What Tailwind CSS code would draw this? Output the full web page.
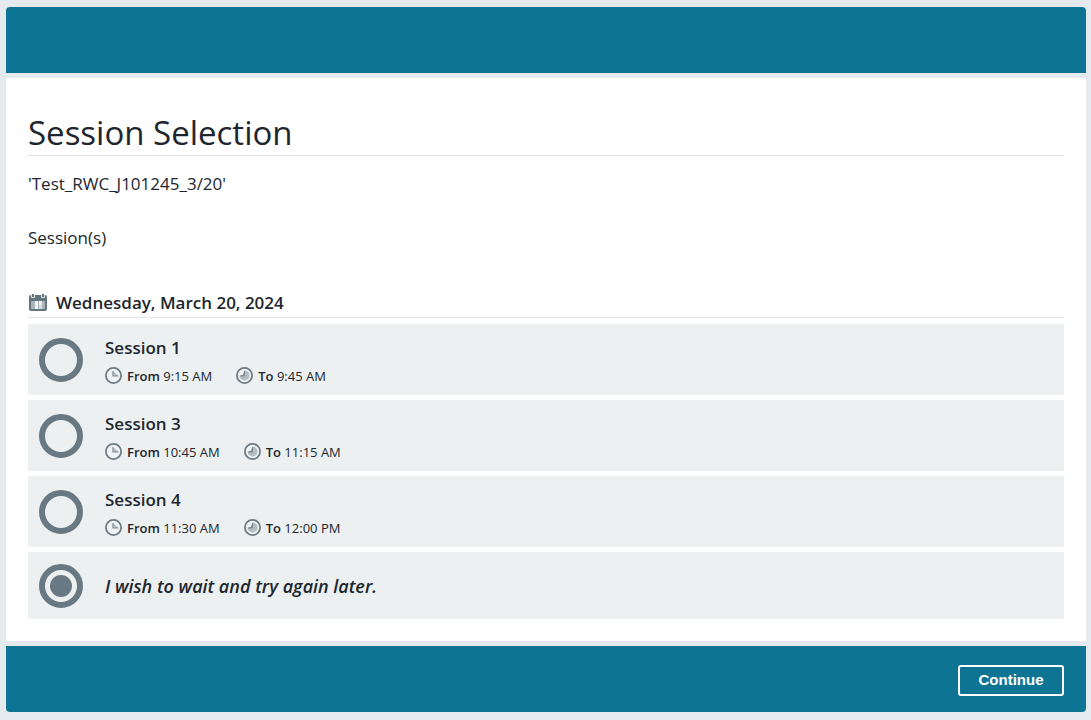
<!DOCTYPE html>
<html lang="en">

<head>
  <meta charset="UTF-8" />
  <meta name="viewport" content="width=device-width, initial-scale=1.0" />
  <title>Session Selection</title>
  <script src="https://cdn.jsdelivr.net/npm/@tailwindcss/browser@4"></script>
</head>

<body class="bg-[#e4eaed] text-[#20262e] font-['Segoe_UI','Open_Sans',sans-serif]">
  <!-- shared icons -->
  <svg class="hidden">
    <symbol id="clock-from" viewBox="0 0 18 18">
      <circle cx="8.5" cy="8.5" r="7.6" fill="#f1f4f4" stroke="#6d7c85" stroke-width="1.8" />
      <path d="M8 4l1 5h4.5" fill="#b3bdc2" />
      <path d="M8 4v5h5.5" fill="none" stroke="#7b8890" stroke-width="1.2" />
    </symbol>
    <symbol id="clock-to" viewBox="0 0 18 18">
      <circle cx="8.5" cy="8.5" r="7.6" fill="#f1f4f4" stroke="#6d7c85" stroke-width="1.8" />
      <path d="M8.5 3.5a5 5 0 1 1-5 5h5z" fill="#b3bdc2" />
      <path d="M8.5 4v5H4.5l3-1z" fill="#7b8890" stroke="#7b8890" stroke-width=".9" />
    </symbol>
  </svg>

  <div class="pt-[7px] pr-[5px] pb-2 pl-1.5 flex flex-col gap-[5px]">
    <header class="h-[66px] bg-[#0d7494] rounded-t"></header>

    <form id="sessions" class="bg-white px-[22px] pt-[33px] pb-[22px]">
      <h1 class="text-[33px] leading-[44px] border-b border-[#e2e5e7]">Session Selection</h1>
      <p class="mt-4 text-[17px] leading-6">'Test_RWC_J101245_3/20'</p>
      <p class="mt-[30px] text-[17px] leading-6">Session(s)</p>

      <fieldset class="mt-10">
        <legend class="w-full flex items-center gap-2 pt-px pb-0.5 border-b border-[#e2e5e7] text-[17px] leading-6 font-semibold">
          <svg class="w-5 h-5" viewBox="0 0 20 20">
            <rect x="1" y="2" width="18" height="16" rx="2" fill="#64747d" />
            <path d="M3 8h14v8H3z" fill="#a9b4ba" />
            <path d="M7 8h3v4H7zM11 8h3v4h-3zM7 12h3v4H7z" fill="#eef1f2" />
            <path d="M11 12h3v4h-3z" fill="#d5dbde" />
            <path d="M3.5 .5h3v4h-3zM13.5 .5h3v4h-3z" fill="#64747d" stroke="#fff" stroke-width=".8" />
          </svg>
          Wednesday, March 20, 2024
        </legend>

        <div class="mt-1.5 flex flex-col gap-[5px]">
          <label class="h-[71px] flex items-center bg-[#ecf0f1] pl-[11px]">
            <input type="radio" name="session" value="1" class="appearance-none w-11 h-11 shrink-0 rounded-full border-6 border-[#697983] p-[5px] bg-clip-content checked:bg-[#697983]" />
            <span class="ml-[22px] pt-0.5">
              <span class="block text-[17px] leading-6 font-semibold">Session 1</span>
              <span class="mt-1.5 flex items-center text-[13px] leading-5">
                <svg class="w-[18px] h-[18px] mr-1"><use href="#clock-from" /></svg>
                <span><b class="font-semibold">From</b> 9:15 AM</span>
                <svg class="w-[18px] h-[18px] ml-6 mr-1"><use href="#clock-to" /></svg>
                <span><b class="font-semibold">To</b> 9:45 AM</span>
              </span>
            </span>
          </label>

          <label class="h-[71px] flex items-center bg-[#ecf0f1] pl-[11px]">
            <input type="radio" name="session" value="3" class="appearance-none w-11 h-11 shrink-0 rounded-full border-6 border-[#697983] p-[5px] bg-clip-content checked:bg-[#697983]" />
            <span class="ml-[22px] pt-0.5">
              <span class="block text-[17px] leading-6 font-semibold">Session 3</span>
              <span class="mt-1.5 flex items-center text-[13px] leading-5">
                <svg class="w-[18px] h-[18px] mr-1"><use href="#clock-from" /></svg>
                <span><b class="font-semibold">From</b> 10:45 AM</span>
                <svg class="w-[18px] h-[18px] ml-6 mr-1"><use href="#clock-to" /></svg>
                <span><b class="font-semibold">To</b> 11:15 AM</span>
              </span>
            </span>
          </label>

          <label class="h-[71px] flex items-center bg-[#ecf0f1] pl-[11px]">
            <input type="radio" name="session" value="4" class="appearance-none w-11 h-11 shrink-0 rounded-full border-6 border-[#697983] p-[5px] bg-clip-content checked:bg-[#697983]" />
            <span class="ml-[22px] pt-0.5">
              <span class="block text-[17px] leading-6 font-semibold">Session 4</span>
              <span class="mt-1.5 flex items-center text-[13px] leading-5">
                <svg class="w-[18px] h-[18px] mr-1"><use href="#clock-from" /></svg>
                <span><b class="font-semibold">From</b> 11:30 AM</span>
                <svg class="w-[18px] h-[18px] ml-6 mr-1"><use href="#clock-to" /></svg>
                <span><b class="font-semibold">To</b> 12:00 PM</span>
              </span>
            </span>
          </label>

          <label class="h-[67px] flex items-center bg-[#ecf0f1] pl-[11px]">
            <input type="radio" name="session" value="later" checked class="appearance-none w-11 h-11 shrink-0 rounded-full border-6 border-[#697983] p-[5px] bg-clip-content checked:bg-[#697983]" />
            <span class="ml-[22px] text-lg leading-6 font-semibold italic">I wish to wait and try again later.</span>
          </label>
        </div>
      </fieldset>
    </form>

    <footer class="bg-[#0d7494] rounded-b flex justify-end px-[22px] pt-[19px] pb-4">
      <button type="submit" form="sessions" class="h-[31px] w-[106px] border-2 border-white rounded-[3px] text-white text-[15px] font-bold font-['Liberation_Sans',Arial,sans-serif]">Continue</button>
    </footer>
  </div>
</body>

</html>
